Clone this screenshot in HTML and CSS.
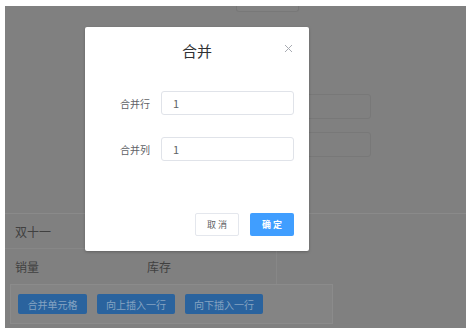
FILE: index.html
```html
<!DOCTYPE html>
<html lang="zh">
<head>
<meta charset="utf-8">
<link rel="stylesheet" href="styles.css">
</head>
<body>
<div class="screen">
  <div class="topbox"></div>
  <div class="bg-form">
    <div class="bg-input"></div>
    <div class="bg-input"></div>
  </div>
  <div class="bg-section">
    <div class="bg-row first"><span class="cell">双十一</span></div>
    <div class="bg-row second"><span class="cell c1">销量</span><span class="cell c2">库存</span></div>
    <div class="bg-panel">
      <span class="bg-btn w1">合并单元格</span>
      <span class="bg-btn w2">向上插入一行</span>
      <span class="bg-btn w2">向下插入一行</span>
    </div>
  </div>

  <div class="dialog">
    <div class="dialog-header">
      <span class="dialog-title">合并</span>
      <span class="dialog-close">
        <svg width="9" height="9" viewBox="0 0 9 9"><path d="M1 1 L8 8 M8 1 L1 8" stroke="#a8abb2" stroke-width="1" fill="none"/></svg>
      </span>
    </div>
    <div class="dialog-body">
      <div class="form-row">
        <label class="form-label">合并行</label>
        <div class="form-input">1</div>
      </div>
      <div class="form-row">
        <label class="form-label">合并列</label>
        <div class="form-input">1</div>
      </div>
    </div>
    <div class="dialog-footer">
      <span class="btn btn-default">取 消</span>
      <span class="btn btn-primary">确 定</span>
    </div>
  </div>
</div>
</body>
</html>
```
FILE: styles.css
```css
html, body {
  margin: 0;
  padding: 0;
  background: #fff;
}
body {
  width: 474px;
  height: 328px;
  overflow: hidden;
  font-family: "Noto Sans CJK SC", "Noto Sans", sans-serif;
}
.screen {
  position: relative;
  margin: 6px 8px 0 5px;
  height: 322px;
  background: #808080;
  overflow: hidden;
}
.topbox {
  margin-left: 231px;
  width: 61px;
  height: 5px;
  border: 1px solid #787878;
  border-top: none;
  border-radius: 0 0 3px 3px;
  background: #828282;
}
.bg-form {
  margin-left: 145px;
  padding-top: 82px;
  display: flex;
  flex-direction: column;
  gap: 13px;
}
.bg-input {
  width: 219px;
  height: 23px;
  border: 1px solid #787878;
  border-radius: 3px;
}
.bg-section {
  margin-top: 56px;
  border-top: 1px solid #8a8a8a;
}
.bg-row {
  width: 271px;
  height: 34px;
  display: flex;
  align-items: center;
  border-bottom: 1px solid #878787;
  box-sizing: content-box;
}
.bg-row.second {
  border-right: 1px solid #878787;
  border-bottom: none;
  height: 35px;
}
.cell {
  padding-left: 10px;
  font-size: 12px;
  color: #404040;
}
.c1 { width: 122px; }
.c2 { padding-left: 10px; }
.bg-panel {
  margin-left: 5px;
  width: 314px;
  height: 38px;
  border: 1px solid #8b8b8b;
  background: #848484;
  display: flex;
  align-items: center;
  gap: 10px;
  padding-left: 7px;
  box-sizing: content-box;
}
.bg-btn {
  height: 20px;
  display: flex;
  align-items: center;
  justify-content: center;
  background: #2a639e;
  color: #86a3c2;
  font-size: 10px;
  border-radius: 2px;
}
.w1 { width: 69px; }
.w2 { width: 78px; }

.dialog {
  position: absolute;
  left: 80px;
  top: 21px;
  width: 224px;
  height: 224px;
  background: #fff;
  border-radius: 2px;
  box-shadow: 0 1px 3px rgba(0,0,0,0.25);
  box-sizing: border-box;
  padding: 0 15px;
  display: flex;
  flex-direction: column;
}
.dialog-header {
  height: 46px;
  display: flex;
  align-items: center;
  justify-content: center;
}
.dialog-title {
  font-size: 15px;
  color: #303133;
  line-height: 1;
}
.dialog-close {
  position: absolute;
  left: 199px;
  top: 17px;
  width: 9px;
  height: 9px;
  display: flex;
}
.dialog-body {
  margin-top: 18px;
  display: flex;
  flex-direction: column;
  gap: 22px;
}
.form-row {
  display: flex;
  align-items: center;
  height: 24px;
}
.form-label {
  width: 61px;
  padding-right: 11px;
  box-sizing: border-box;
  text-align: right;
  font-size: 10px;
  color: #606266;
}
.form-input {
  flex: 1;
  height: 24px;
  box-sizing: border-box;
  border: 1px solid #e0e3e9;
  border-radius: 3px;
  padding-left: 11px;
  display: flex;
  align-items: center;
  font-size: 11px;
  color: #606266;
}
.dialog-footer {
  margin-top: auto;
  padding-bottom: 15px;
  display: flex;
  justify-content: flex-end;
  gap: 11px;
}
.btn {
  width: 44px;
  height: 23px;
  box-sizing: border-box;
  border-radius: 2px;
  display: flex;
  align-items: center;
  justify-content: center;
  font-size: 9px;
}
.btn-default {
  border: 1px solid #e4e7ed;
  color: #606266;
}
.btn-primary {
  background: #409eff;
  color: #fff;
  font-weight: bold;
}
```
